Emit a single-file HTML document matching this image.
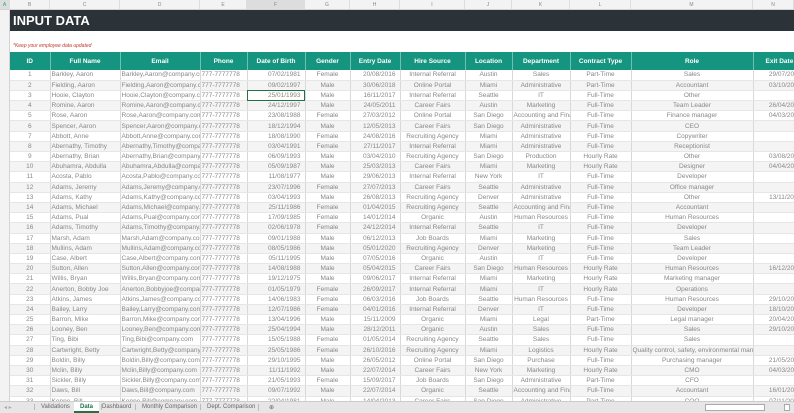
<!DOCTYPE html><html><head><meta charset="utf-8"><style>
*{margin:0;padding:0;box-sizing:border-box}
body{width:794px;height:413px;overflow:hidden;background:#fff;font-family:"Liberation Sans",sans-serif;position:relative}
.ch{position:absolute;top:0;left:0;width:794px;height:10px;background:#f3f3f3;border-bottom:1px solid #d4d4d4;font-size:5px;color:#888}
.ch span{position:absolute;text-align:center;border-right:1px solid #ddd;height:9px;top:0;line-height:10px}
.rh{position:absolute;left:0;top:10px;width:10px;height:391px;background:#f3f3f3;border-right:1px solid #d4d4d4}
.title{position:absolute;left:10px;top:10px;width:784px;height:21px;background:#2c3338;color:#fff;font-weight:bold;font-size:13px;line-height:21px;padding-left:3px}
.note{position:absolute;left:13px;top:43px;font-size:5px;color:#c0392b;font-style:italic}
.wrap{position:absolute;left:10px;top:52px;width:784px;height:349px;overflow:hidden}
table{border-collapse:collapse;table-layout:fixed;width:800px;font-size:6.5px;color:#888}
th{background:#15957f;color:#fff;height:18px;font-size:6.5px;border-right:1px solid #6cc1b2;font-weight:bold}
td{height:10.2px;border-right:1px solid #d8d8d8;border-bottom:1px solid #e6e6e6;white-space:nowrap;overflow:hidden;text-align:center;padding:0 1px;line-height:9px}
tr:nth-child(odd) td{background:#f4f4f4}
td:nth-child(2),td:nth-child(3),td:nth-child(4){text-align:left}
td:nth-child(5),td:nth-child(7){text-align:right;padding-right:4px}
.tabs{position:absolute;left:0;top:401px;width:794px;height:12px;background:#e6e6e6;border-top:1px solid #ccc;font-size:6px;color:#666}
.tabs span{position:absolute;top:2px}
</style></head><body>
<div class="ch"><span style="left:0;width:10px;background:#ddd;color:#2a7">A</span><span style="left:10px;width:40px">B</span><span style="left:50px;width:70px">C</span><span style="left:120px;width:80px">D</span><span style="left:200px;width:47px">E</span><span style="left:247px;width:58px;background:#ddd">F</span><span style="left:305px;width:45px">G</span><span style="left:350px;width:50px">H</span><span style="left:400px;width:65px">I</span><span style="left:465px;width:47px">J</span><span style="left:512px;width:58px">K</span><span style="left:570px;width:61px">L</span><span style="left:631px;width:122px">M</span><span style="left:753px;width:41px">N</span></div>
<div class="rh"></div>
<div class="title">INPUT DATA</div>
<div class="note">*Keep your employee data updated</div>
<div class="wrap"><table>
<colgroup><col style="width:40px"><col style="width:70px"><col style="width:80px"><col style="width:47px"><col style="width:58px"><col style="width:45px"><col style="width:50px"><col style="width:65px"><col style="width:47px"><col style="width:58px"><col style="width:61px"><col style="width:122px"><col style="width:57px"></colgroup>
<tr><th>ID</th><th>Full Name</th><th>Email</th><th>Phone</th><th>Date of Birth</th><th>Gender</th><th>Entry Date</th><th>Hire Source</th><th>Location</th><th>Department</th><th>Contract Type</th><th>Role</th><th style="text-align:left;padding-left:12px">Exit Date</th></tr>
<tr><td>1</td><td>Barkley, Aaron</td><td>Barkley,Aaron@company.com</td><td>777-7777778</td><td>07/02/1981</td><td>Female</td><td>20/08/2016</td><td>Internal Referral</td><td>Austin</td><td>Sales</td><td>Part-Time</td><td>Sales</td><td>29/07/20</td></tr>
<tr><td>2</td><td>Fielding, Aaron</td><td>Fielding,Aaron@company.com</td><td>777-7777778</td><td>09/02/1997</td><td>Male</td><td>30/06/2018</td><td>Online Portal</td><td>Miami</td><td>Administrative</td><td>Part-Time</td><td>Accountant</td><td>03/10/20</td></tr>
<tr><td>3</td><td>Hooie, Clayton</td><td>Hooie,Clayton@company.com</td><td>777-7777778</td><td style="outline:1.5px solid #217346;outline-offset:-1px">25/01/1993</td><td>Male</td><td>16/11/2017</td><td>Internal Referral</td><td>Seattle</td><td>IT</td><td>Full-Time</td><td>Other</td><td></td></tr>
<tr><td>4</td><td>Romine, Aaron</td><td>Romine,Aaron@company.com</td><td>777-7777778</td><td>24/12/1997</td><td>Male</td><td>24/05/2011</td><td>Career Fairs</td><td>Austin</td><td>Marketing</td><td>Full-Time</td><td>Team Leader</td><td>26/04/20</td></tr>
<tr><td>5</td><td>Rose, Aaron</td><td>Rose,Aaron@company.com</td><td>777-7777778</td><td>23/08/1988</td><td>Female</td><td>27/03/2012</td><td>Online Portal</td><td>San Diego</td><td>Accounting and Finance</td><td>Full-Time</td><td>Finance manager</td><td>04/03/20</td></tr>
<tr><td>6</td><td>Spencer, Aaron</td><td>Spencer,Aaron@company.com</td><td>777-7777778</td><td>18/12/1994</td><td>Male</td><td>12/05/2013</td><td>Career Fairs</td><td>San Diego</td><td>Administrative</td><td>Full-Time</td><td>CEO</td><td></td></tr>
<tr><td>7</td><td>Abbott, Anne</td><td>Abbott,Anne@company.com</td><td>777-7777778</td><td>18/08/1990</td><td>Female</td><td>24/08/2016</td><td>Recruiting Agency</td><td>Miami</td><td>Administrative</td><td>Full-Time</td><td>Copywriter</td><td></td></tr>
<tr><td>8</td><td>Abernathy, Timothy</td><td>Abernathy,Timothy@company.com</td><td>777-7777778</td><td>03/04/1991</td><td>Female</td><td>27/11/2017</td><td>Internal Referral</td><td>Miami</td><td>Administrative</td><td>Full-Time</td><td>Receptionist</td><td></td></tr>
<tr><td>9</td><td>Abernathy, Brian</td><td>Abernathy,Brian@company.com</td><td>777-7777778</td><td>06/09/1993</td><td>Male</td><td>03/04/2010</td><td>Recruiting Agency</td><td>San Diego</td><td>Production</td><td>Hourly Rate</td><td>Other</td><td>03/08/20</td></tr>
<tr><td>10</td><td>Abuhamra, Abdulla</td><td>Abuhamra,Abdulla@company.com</td><td>777-7777778</td><td>05/09/1987</td><td>Male</td><td>25/03/2013</td><td>Career Fairs</td><td>Miami</td><td>Marketing</td><td>Hourly Rate</td><td>Designer</td><td>04/04/20</td></tr>
<tr><td>11</td><td>Acosta, Pablo</td><td>Acosta,Pablo@company.com</td><td>777-7777778</td><td>11/08/1977</td><td>Male</td><td>29/06/2013</td><td>Internal Referral</td><td>New York</td><td>IT</td><td>Full-Time</td><td>Developer</td><td></td></tr>
<tr><td>12</td><td>Adams, Jeremy</td><td>Adams,Jeremy@company.com</td><td>777-7777778</td><td>23/07/1996</td><td>Female</td><td>27/07/2013</td><td>Career Fairs</td><td>Seattle</td><td>Administrative</td><td>Full-Time</td><td>Office manager</td><td></td></tr>
<tr><td>13</td><td>Adams, Kathy</td><td>Adams,Kathy@company.com</td><td>777-7777778</td><td>03/04/1993</td><td>Male</td><td>26/08/2013</td><td>Recruiting Agency</td><td>Denver</td><td>Administrative</td><td>Full-Time</td><td>Other</td><td>13/11/20</td></tr>
<tr><td>14</td><td>Adams, Michael</td><td>Adams,Michael@company.com</td><td>777-7777778</td><td>25/11/1986</td><td>Female</td><td>01/04/2015</td><td>Recruiting Agency</td><td>Seattle</td><td>Accounting and Finance</td><td>Full-Time</td><td>Accountant</td><td></td></tr>
<tr><td>15</td><td>Adams, Pual</td><td>Adams,Pual@company.com</td><td>777-7777778</td><td>17/09/1985</td><td>Female</td><td>14/01/2014</td><td>Organic</td><td>Austin</td><td>Human Resources</td><td>Full-Time</td><td>Human Resources</td><td></td></tr>
<tr><td>16</td><td>Adams, Timothy</td><td>Adams,Timothy@company.com</td><td>777-7777778</td><td>02/06/1978</td><td>Female</td><td>24/12/2014</td><td>Internal Referral</td><td>Seattle</td><td>IT</td><td>Full-Time</td><td>Developer</td><td></td></tr>
<tr><td>17</td><td>Marsh, Adam</td><td>Marsh,Adam@company.com</td><td>777-7777778</td><td>09/01/1988</td><td>Male</td><td>06/12/2013</td><td>Job Boards</td><td>Miami</td><td>Marketing</td><td>Full-Time</td><td>Sales</td><td></td></tr>
<tr><td>18</td><td>Mullins, Adam</td><td>Mullins,Adam@company.com</td><td>777-7777778</td><td>08/05/1986</td><td>Male</td><td>05/01/2020</td><td>Recruiting Agency</td><td>Denver</td><td>Marketing</td><td>Full-Time</td><td>Team Leader</td><td></td></tr>
<tr><td>19</td><td>Case, Albert</td><td>Case,Albert@company.com</td><td>777-7777778</td><td>05/11/1995</td><td>Male</td><td>07/05/2016</td><td>Organic</td><td>Austin</td><td>IT</td><td>Full-Time</td><td>Developer</td><td></td></tr>
<tr><td>20</td><td>Sutton, Allen</td><td>Sutton,Allen@company.com</td><td>777-7777778</td><td>14/08/1988</td><td>Male</td><td>05/04/2015</td><td>Career Fairs</td><td>San Diego</td><td>Human Resources</td><td>Hourly Rate</td><td>Human Resources</td><td>16/12/20</td></tr>
<tr><td>21</td><td>Willis, Bryan</td><td>Willis,Bryan@company.com</td><td>777-7777778</td><td>19/12/1975</td><td>Male</td><td>09/06/2017</td><td>Internal Referral</td><td>Miami</td><td>Marketing</td><td>Hourly Rate</td><td>Marketing manager</td><td></td></tr>
<tr><td>22</td><td>Anerton, Bobby Joe</td><td>Anerton,Bobbyjoe@company.com</td><td>777-7777778</td><td>01/05/1979</td><td>Female</td><td>26/09/2017</td><td>Internal Referral</td><td>Miami</td><td>IT</td><td>Hourly Rate</td><td>Operations</td><td></td></tr>
<tr><td>23</td><td>Atkins, James</td><td>Atkins,James@company.com</td><td>777-7777778</td><td>14/06/1983</td><td>Female</td><td>06/03/2016</td><td>Job Boards</td><td>Seattle</td><td>Human Resources</td><td>Full-Time</td><td>Human Resources</td><td>29/10/20</td></tr>
<tr><td>24</td><td>Bailey, Larry</td><td>Bailey,Larry@company.com</td><td>777-7777778</td><td>12/07/1986</td><td>Female</td><td>04/01/2016</td><td>Internal Referral</td><td>Denver</td><td>IT</td><td>Full-Time</td><td>Developer</td><td>18/10/20</td></tr>
<tr><td>25</td><td>Barron, Mike</td><td>Barron,Mike@company.com</td><td>777-7777778</td><td>13/04/1996</td><td>Male</td><td>15/11/2009</td><td>Organic</td><td>Miami</td><td>Legal</td><td>Part-Time</td><td>Legal manager</td><td>20/04/20</td></tr>
<tr><td>26</td><td>Looney, Ben</td><td>Looney,Ben@company.com</td><td>777-7777778</td><td>25/04/1994</td><td>Male</td><td>28/12/2011</td><td>Organic</td><td>Austin</td><td>Sales</td><td>Full-Time</td><td>Sales</td><td>29/10/20</td></tr>
<tr><td>27</td><td>Ting, Bibi</td><td>Ting,Bibi@company.com</td><td>777-7777778</td><td>15/05/1988</td><td>Female</td><td>01/05/2014</td><td>Recruiting Agency</td><td>Seattle</td><td>Sales</td><td>Full-Time</td><td>Sales</td><td></td></tr>
<tr><td>28</td><td>Cartwright, Betty</td><td>Cartwright,Betty@company.com</td><td>777-7777778</td><td>25/05/1986</td><td>Female</td><td>26/10/2016</td><td>Recruiting Agency</td><td>Miami</td><td>Logistics</td><td>Hourly Rate</td><td>Quality control, safety, environmental manager</td><td></td></tr>
<tr><td>29</td><td>Boldin, Billy</td><td>Boldin,Billy@company.com</td><td>777-7777778</td><td>29/10/1995</td><td>Male</td><td>26/05/2012</td><td>Online Portal</td><td>San Diego</td><td>Purchase</td><td>Full-Time</td><td>Purchasing manager</td><td>21/05/20</td></tr>
<tr><td>30</td><td>Mclin, Billy</td><td>Mclin,Billy@company.com</td><td>777-7777778</td><td>11/11/1992</td><td>Male</td><td>22/07/2014</td><td>Career Fairs</td><td>New York</td><td>Marketing</td><td>Hourly Rate</td><td>CMO</td><td>04/03/20</td></tr>
<tr><td>31</td><td>Sickler, Billy</td><td>Sickler,Billy@company.com</td><td>777-7777778</td><td>21/05/1993</td><td>Female</td><td>15/09/2017</td><td>Job Boards</td><td>San Diego</td><td>Administrative</td><td>Part-Time</td><td>CFO</td><td></td></tr>
<tr><td>32</td><td>Daws, Bill</td><td>Daws,Bill@company.com</td><td>777-7777778</td><td>09/07/1992</td><td>Male</td><td>22/07/2014</td><td>Organic</td><td>Seattle</td><td>Accounting and Finance</td><td>Full-Time</td><td>Accountant</td><td>16/01/20</td></tr>
<tr><td>33</td><td>Kenne, Bill</td><td>Kenne,Bill@company.com</td><td>777-7777778</td><td>22/04/1981</td><td>Male</td><td>14/04/2013</td><td>Career Fairs</td><td>San Diego</td><td>Administrative</td><td>Part-Time</td><td>COO</td><td>07/11/20</td></tr>
</table></div>
<div class="tabs">
<span style="left:4px;color:#aaa">◂ ▸</span>
<span style="left:34px;border-left:1px solid #bbb;padding-left:6px">Validations</span>
<span style="left:74px;top:0;background:#fff;color:#217346;font-weight:bold;padding:2px 6px;border-bottom:2px solid #217346;height:11px">Data</span>
<span style="left:101px;border-left:1px solid #bbb;padding-left:0">Dashbaord</span>
<span style="left:135px;border-left:1px solid #bbb;padding-left:6px">Monthly Comparison</span>
<span style="left:200px;border-left:1px solid #bbb;padding-left:6px">Dept. Comparison</span>
<span style="left:258px;border-left:1px solid #bbb;padding-left:10px">⊕</span>
<span style="left:705px;top:2px;width:60px;height:7px;background:#fff;border:1px solid #aaa"></span>
<span style="left:784px;top:2px;width:6px;height:7px;background:#fff;border:1px solid #aaa"></span>
</div>
</body></html>
